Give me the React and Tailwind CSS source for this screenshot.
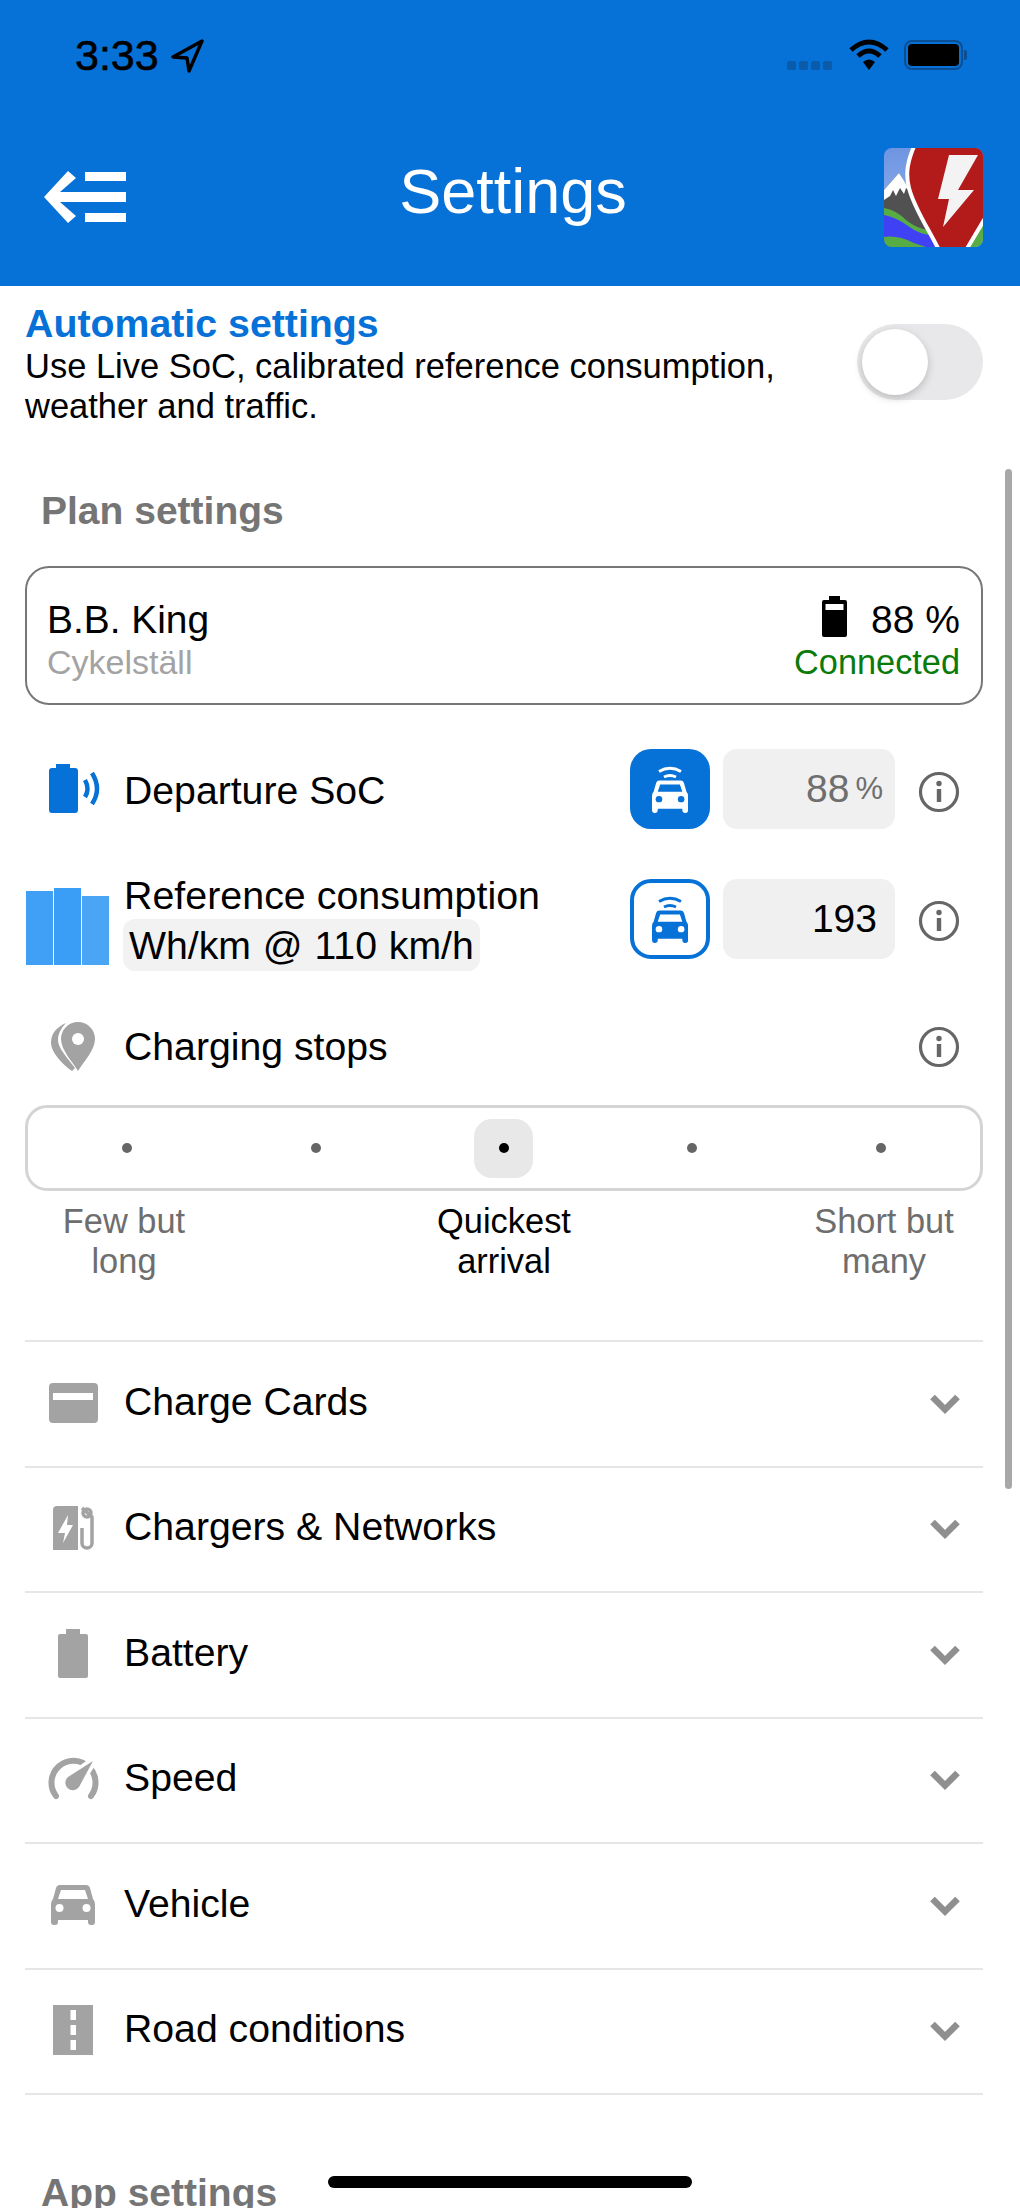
import React from "react";

const Info = () => (
  <svg className="w-[42px] h-[42px] shrink-0" viewBox="0 0 42 42">
    <circle cx="21" cy="21" r="18.5" fill="none" stroke="#666" strokeWidth="3.2" />
    <rect x="18.8" y="18" width="4.4" height="13" fill="#666" />
    <circle cx="21" cy="12.5" r="2.7" fill="#666" />
  </svg>
);

const CarBody = ({ fill, cut }) => (
  <g>
    <path
      d="M9 0H35Q38 0 39 3L42 14Q44 16 44 19V37Q44 40 41 40H40Q37 40 37 37V35H7V37Q7 40 4 40H3Q0 40 0 37V19Q0 16 2 14L5 3Q6 0 9 0Z"
      fill={fill}
    />
    <path d="M10 5H34L37 14H7Z" fill={cut} />
    <circle cx="8.5" cy="23" r="4" fill={cut} />
    <circle cx="35.5" cy="23" r="4" fill={cut} />
  </g>
);

const WifiCar = ({ fill, cut }) => (
  <svg className="w-[36px] h-[47px]" viewBox="0 0 36 47">
    <path d="M7 5.5Q18 -1 29 5.5" fill="none" stroke={fill} strokeWidth="3" />
    <path d="M12 11Q18 8 24 11" fill="none" stroke={fill} strokeWidth="3" />
    <g transform="translate(0 14.5) scale(0.82 0.81)">
      <CarBody fill={fill} cut={cut} />
    </g>
  </svg>
);

const Chevron = () => (
  <svg className="w-[32px] h-[22px] shrink-0" viewBox="0 0 32 22">
    <path d="M3.5 4L16 16.5L28.5 4" fill="none" stroke="#8f8f8f" strokeWidth="6.5" />
  </svg>
);

const CardIcon = () => (
  <svg className="w-[99px] h-[50px] shrink-0" viewBox="25 1375 99 50">
    <rect x="49" y="1380" width="49" height="40" rx="4" fill="#a3a3a3" />
    <rect x="53" y="1390" width="40" height="7" fill="#fff" />
  </svg>
);
const ChargerIcon = () => (
  <svg className="w-[99px] h-[50px] shrink-0" viewBox="25 1500 99 50">
    <path d="M57 1503H78V1547H53V1507Q53 1503 57 1503Z" fill="#a3a3a3" />
    <path d="M68 1512L58 1530H65L63 1540L73 1522H67Z" fill="#fff" />
    <path d="M82 1505L92 1514V1540A5 5 0 0 1 82 1540V1525" fill="none" stroke="#a3a3a3" strokeWidth="3.5" />
    <circle cx="87" cy="1510" r="4" fill="none" stroke="#a3a3a3" strokeWidth="3.5" />
  </svg>
);
const BatteryIcon = () => (
  <svg className="w-[99px] h-[50px] shrink-0" viewBox="25 1627 99 50">
    <path d="M66 1627H80V1632H86Q88 1632 88 1634V1674Q88 1676 86 1676H60Q58 1676 58 1674V1634Q58 1632 60 1632H66Z" fill="#a3a3a3" />
  </svg>
);
const SpeedIcon = () => (
  <svg className="w-[99px] h-[50px] shrink-0" viewBox="25 1752 99 50">
    <path d="M56 1794A22 22 0 1 1 91 1794" fill="none" stroke="#a3a3a3" strokeWidth="6" strokeLinecap="round" />
    <path d="M97 1755L66 1777L76 1788Z" fill="#fff" stroke="#fff" strokeWidth="6" />
    <path d="M93 1759L68 1775A7.5 7.5 0 1 0 79 1785Z" fill="#a3a3a3" />
  </svg>
);
const VehicleIcon = () => (
  <svg className="w-[99px] h-[50px] shrink-0" viewBox="25 1880 99 50">
    <g transform="translate(51 1885)">
      <CarBody fill="#a3a3a3" cut="#fff" />
    </g>
  </svg>
);
const RoadIcon = () => (
  <svg className="w-[99px] h-[50px] shrink-0" viewBox="25 2003 99 50">
    <rect x="53" y="2003" width="40" height="50" fill="#a3a3a3" />
    <rect x="70.5" y="2008" width="5.5" height="10" fill="#fff" />
    <rect x="70.5" y="2023" width="5.5" height="10" fill="#fff" />
    <rect x="70.5" y="2038" width="5.5" height="10" fill="#fff" />
  </svg>
);

const Row = ({ icon, label }) => (
  <div className="h-[125.5px] border-t-2 border-[#e6e6e6] flex items-center pr-[22px]">
    <div className="-mt-[2px]">{icon}</div>
    <span className="flex-1 text-[39.2px] leading-[44px] text-black -mt-[4px]">{label}</span>
    <Chevron />
  </div>
);

const Logo = () => (
  <svg className="w-[99px] h-[99px] rounded-[8px]" viewBox="0 0 99 99">
    <defs>
      <linearGradient id="sky" x1="0" y1="0" x2="0" y2="1">
        <stop offset="0" stopColor="#6e95e2" />
        <stop offset="1" stopColor="#9ab8ee" />
      </linearGradient>
    </defs>
    <rect width="99" height="99" fill="url(#sky)" />
    <path d="M0 42L15 25L30 50L60 99H0Z" fill="#515151" />
    <path d="M0 42L15 25L27 44L22 40L20 46L16 40L12 48L9 42L6 48L0 52Z" fill="#fff" />
    <path d="M0 60Q12 62 22 72Q32 80 44 82L60 99H0Z" fill="#57ad44" />
    <path d="M0 67Q14 70 24 78Q36 87 49 87L56 99H0Z" fill="#4040f5" />
    <path d="M0 89Q14 87 30 95L42 99H0Z" fill="#57ad44" />
    <path d="M84 99L99 72V99Z" fill="#57ad44" />
    <path d="M31 -4C24 12 21 25 25 40C30 60 44 80 56 104H81L106 62V-4Z" fill="#b31a1a" stroke="#fff" strokeWidth="4" />
    <path d="M65 7H94L74 42H90L59 79L65 51H54Z" fill="#f3f3f3" />
  </svg>
);

export default function App() {
  return (
    <div className="relative w-[1020px] h-[2208px] overflow-hidden bg-white font-['Liberation_Sans',Arial,sans-serif] text-black">
      {/* header */}
      <header className="h-[286px] bg-[#0671d7] flex flex-col">
        <div className="h-[148px] flex items-start pl-[75px] pr-[53px] pt-[33px]">
          <span className="text-[43px] leading-[44px] [-webkit-text-stroke:0.6px_black]">3:33</span>
          <svg className="ml-[12px] mt-[6px] w-[33px] h-[34px]" viewBox="0 0 33 34">
            <path d="M31 2L2 18L16 19L18 32Z" fill="none" stroke="#000" strokeWidth="3.4" strokeLinejoin="round" />
          </svg>
          <div className="flex-1" />
          <div className="flex items-center gap-[3px] mt-[28px] mr-[17px]">
            <span className="w-[9px] h-[9px] rounded-[2px] bg-[#0a5cab]" />
            <span className="w-[9px] h-[9px] rounded-[2px] bg-[#0a5cab]" />
            <span className="w-[9px] h-[9px] rounded-[2px] bg-[#0a5cab]" />
            <span className="w-[9px] h-[9px] rounded-[2px] bg-[#0a5cab]" />
          </div>
          <svg className="w-[40px] h-[32px] mt-[6px] mr-[15px]" viewBox="0 0 40 32">
            <path d="M2 11Q20 -5 38 11" fill="none" stroke="#000" strokeWidth="5" />
            <path d="M9 17Q20 7 31 17" fill="none" stroke="#000" strokeWidth="5" />
            <path d="M14 23L20 31L26 23Q20 18 14 23Z" fill="#000" />
          </svg>
          <div className="flex items-center mt-[7px]">
            <div className="w-[59px] h-[30px] rounded-[8px] border-[2.5px] border-[#0a4f94] p-[2px]">
              <div className="w-full h-full rounded-[4px] bg-black" />
            </div>
            <div className="w-[3px] h-[10px] rounded-r-[2px] bg-[#0a4f94] ml-[1px]" />
          </div>
        </div>
        <div className="flex-1 flex items-start pl-[44px] pr-[37px]">
          <svg className="w-[82px] h-[52px] mt-[23px] shrink-0" viewBox="0 0 82 52">
            <path d="M24 0L32 7L16 21H82V31H16L32 45L24 52L0 26Z" fill="#fff" />
            <rect x="41" y="1" width="41" height="9" fill="#fff" />
            <rect x="41" y="42" width="41" height="9" fill="#fff" />
          </svg>
          <h1 className="flex-1 text-center text-[63px] leading-[86px] text-white font-normal pl-[16px]">Settings</h1>
          <Logo />
        </div>
      </header>

      <main className="pl-[25px] pr-[37px]">
        {/* automatic */}
        <section className="pt-[16px] flex items-start justify-between">
          <div className="w-[790px]">
            <div className="text-[39.3px] leading-[44px] font-bold text-[#0671d7] -mt-[1px] mb-[1px]">Automatic settings</div>
            <p className="text-[34.5px] leading-[40px]">Use Live SoC, calibrated reference consumption, weather and traffic.</p>
          </div>
          <div className="relative w-[126px] h-[76px] mt-[22px] rounded-full bg-[#e8e8ea]">
            <div className="absolute left-[5px] top-[5px] w-[66px] h-[66px] rounded-full bg-white shadow-[0_3px_8px_rgba(0,0,0,0.2)]" />
          </div>
        </section>

        <h2 className="mt-[63px] pl-[16px] text-[39px] leading-[44px] font-bold text-[#757575]">Plan settings</h2>

        {/* vehicle card */}
        <section className="mt-[33px] h-[139px] rounded-[24px] border-[2.5px] border-[#777] pl-[20px] pr-[21px] pt-[9px] flex items-center justify-between">
          <div>
            <div className="text-[38.9px] leading-[44px]">B.B. King</div>
            <div className="text-[34px] leading-[40px] text-[#a3a3a3]">Cykelställ</div>
          </div>
          <div className="flex flex-col items-end">
            <div className="flex items-center gap-[24px]">
              <svg className="w-[25px] h-[41px] -mt-[7px]" viewBox="0 0 25 41">
                <path d="M7 0H18V4H23Q25 4 25 6V39Q25 41 23 41H2Q0 41 0 39V6Q0 4 2 4H7Z" fill="#000" />
                <rect x="3.5" y="8" width="18" height="6" fill="#fff" />
              </svg>
              <span className="text-[39px] leading-[44px]">88 %</span>
            </div>
            <div className="text-[34.3px] leading-[40px] text-[#0a7a0a]">Connected</div>
          </div>
        </section>

        {/* departure */}
        <section className="mt-[44px] h-[80px] flex items-center">
          <svg className="w-[99px] h-[50px] shrink-0" viewBox="25 767 99 50">
            <path d="M56 767H70V771H75Q78 771 78 774V813Q78 816 75 816H52Q49 816 49 813V774Q49 771 52 771H56Z" fill="#0671d7" />
            <path d="M85 783Q90 792 85 800" fill="none" stroke="#0671d7" strokeWidth="4.5" />
            <path d="M92 776Q102 792 92 807" fill="none" stroke="#0671d7" strokeWidth="4.5" />
          </svg>
          <span className="flex-1 text-[39.2px] leading-[48px] mt-[4px]">Departure SoC</span>
          <div className="w-[80px] h-[80px] rounded-[21px] bg-[#0671d7] flex items-center justify-center">
            <WifiCar fill="#fff" cut="#0671d7" />
          </div>
          <div className="ml-[13px] w-[172px] h-[80px] rounded-[14px] bg-[#f0f0f0] flex items-center justify-end pr-[12px] text-[#6e6e6e]">
            <span className="text-[39px] mt-[1px]">88</span>
            <span className="text-[31px] ml-[6px] mt-[1px]">%</span>
          </div>
          <div className="ml-[23px] mr-[23px] mt-[5px]"><Info /></div>
        </section>

        {/* reference */}
        <section className="mt-[50px] h-[80px] flex items-center">
          <div className="w-[98px] h-[84px] shrink-0 flex items-end gap-[1px] pl-[1px] mt-[8px]">
            <span className="w-[27px] h-[74px] bg-[#3fa0f5]" />
            <span className="w-[27px] h-[77px] bg-[#3a9df6]" />
            <span className="w-[27px] h-[69px] bg-[#4aa6f5]" />
          </div>
          <div className="flex-1 mt-[6px] ml-[1px]">
            <div className="text-[39.4px] leading-[44px] -mt-[1px] mb-[1px]">Reference consumption</div>
            <div className="inline-block -ml-[1px] mt-[1px] h-[52px] px-[6px] rounded-[12px] bg-[#f2f2f2] text-[39.2px] leading-[54px] whitespace-nowrap [word-spacing:1px]">Wh/km @ 110 km/h</div>
          </div>
          <div className="w-[80px] h-[80px] rounded-[21px] border-[4px] border-[#0671d7] flex items-center justify-center">
            <WifiCar fill="#0671d7" cut="#fff" />
          </div>
          <div className="ml-[13px] w-[172px] h-[80px] rounded-[14px] bg-[#f0f0f0] flex items-center justify-end pr-[18px]">
            <span className="text-[39px] mt-[1px]">193</span>
          </div>
          <div className="ml-[23px] mr-[23px] mt-[4px]"><Info /></div>
        </section>

        {/* charging stops */}
        <section className="mt-[66px] h-[44px] flex items-center">
          <svg className="w-[99px] h-[50px] shrink-0" viewBox="25 1020 99 50">
            <path d="M66 1021C57 1025 51 1031 51 1041C51 1050 62 1062 72 1069L75 1066C66 1054 58 1046 58 1038C58 1032 61 1026 66 1021Z" fill="#a3a3a3" />
            <path d="M78 1020A17 17 0 0 1 95 1037C95 1048 84 1059 78 1069C72 1059 61 1048 61 1037A17 17 0 0 1 78 1020Z" fill="#a3a3a3" />
            <circle cx="78" cy="1037" r="6" fill="#fff" />
          </svg>
          <span className="flex-1 text-[39.2px] leading-[44px]">Charging stops</span>
          <div className="mr-[23px]"><Info /></div>
        </section>

        {/* slider */}
        <section className="mt-[36px] h-[86px] rounded-[22px] border-[3.5px] border-[#d4d4d4] px-[5px] grid grid-cols-5 items-center">
          <div className="flex items-center justify-center"><span className="w-[10px] h-[10px] rounded-full bg-[#666]" /></div>
          <div className="flex items-center justify-center"><span className="w-[10px] h-[10px] rounded-full bg-[#666]" /></div>
          <div className="flex items-center justify-center">
            <div className="w-[59px] h-[59px] rounded-[18px] bg-[#e8e8e8] flex items-center justify-center">
              <span className="w-[10px] h-[10px] rounded-full bg-black" />
            </div>
          </div>
          <div className="flex items-center justify-center"><span className="w-[10px] h-[10px] rounded-full bg-[#666]" /></div>
          <div className="flex items-center justify-center"><span className="w-[10px] h-[10px] rounded-full bg-[#666]" /></div>
        </section>
        <section className="mt-[11px] flex justify-between text-center text-[34.4px] leading-[39.5px] -mx-[1px]">
          <div className="w-[200px] text-[#6e6e6e]">Few but<br />long</div>
          <div className="w-[200px] text-black">Quickest<br />arrival</div>
          <div className="w-[200px] text-[#6e6e6e]">Short but<br />many</div>
        </section>

        {/* list */}
        <section className="mt-[59px] border-b-2 border-[#e6e6e6]">
          <Row icon={<CardIcon />} label="Charge Cards" />
          <Row icon={<ChargerIcon />} label="Chargers & Networks" />
          <Row icon={<BatteryIcon />} label="Battery" />
          <Row icon={<SpeedIcon />} label="Speed" />
          <Row icon={<VehicleIcon />} label="Vehicle" />
          <Row icon={<RoadIcon />} label="Road conditions" />
        </section>

        <h2 className="mt-[76px] pl-[16px] text-[39px] leading-[44px] font-bold text-[#757575]">App settings</h2>
      </main>

      {/* overlays */}
      <div className="absolute left-[1005px] top-[469px] w-[7px] h-[1020px] rounded-full bg-[#a8a8a8]" />
      <div className="absolute left-[328px] top-[2176px] w-[364px] h-[12px] rounded-full bg-black" />
    </div>
  );
}
